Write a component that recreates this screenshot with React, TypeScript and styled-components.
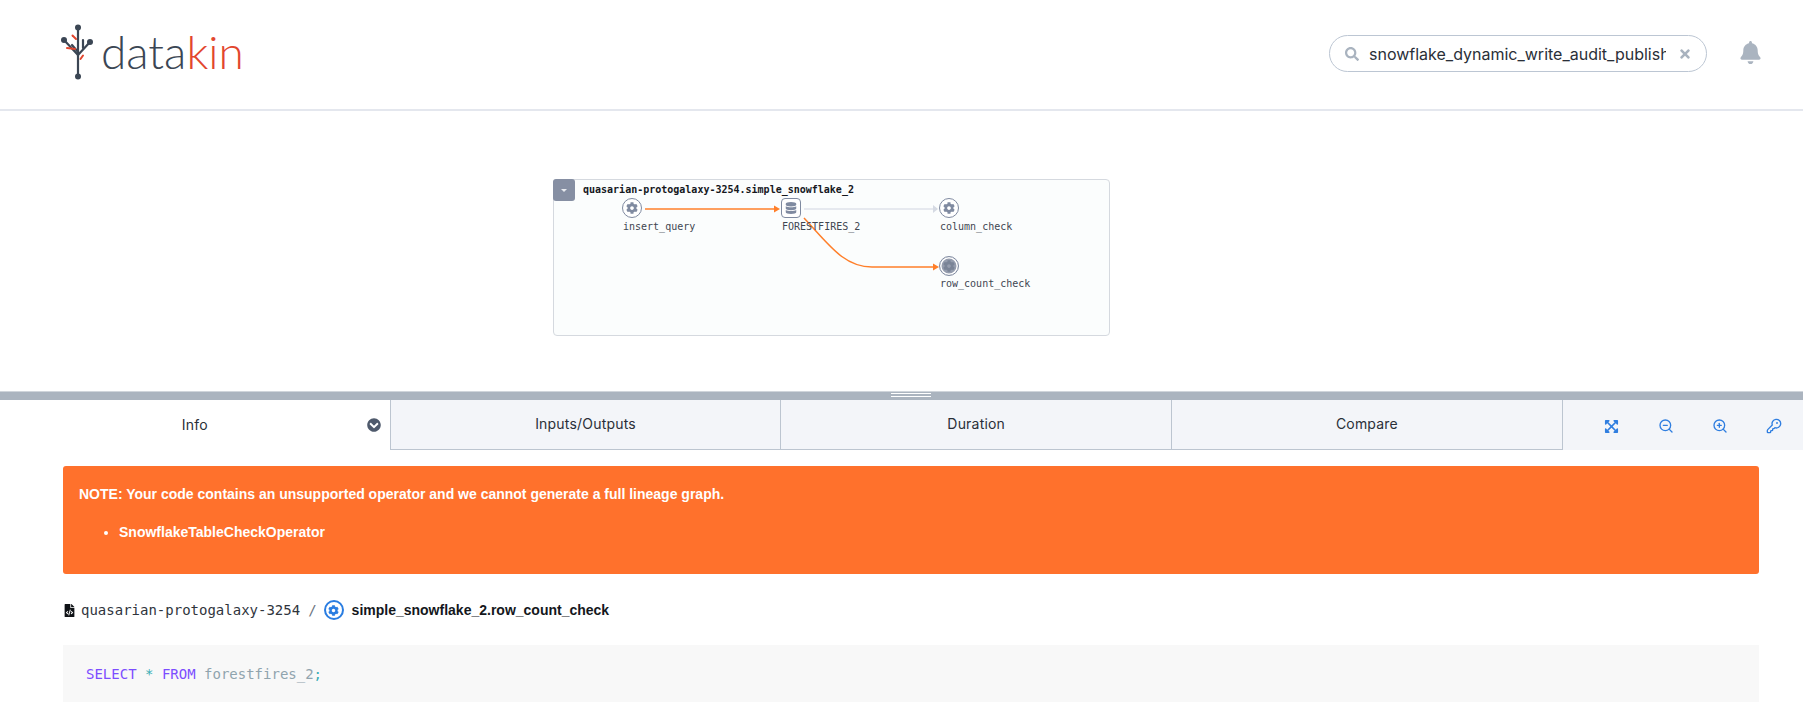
import React from "react";
import styled, { createGlobalStyle } from "styled-components";
import {
  FaBell,
  FaChevronCircleDown,
  FaCog,
  FaDatabase,
  FaExpandArrowsAlt,
  FaFileCode,
  FaSearch,
  FaTimes,
} from "react-icons/fa";
import { KeyRound, ZoomIn, ZoomOut } from "lucide-react";

const Global = createGlobalStyle`
  html, body { margin: 0; padding: 0; background: #fff; height: 712px; overflow: hidden; }
  * { box-sizing: border-box; }
  body { font-family: Inter, "Liberation Sans", sans-serif; color: #1f2530; }
`;

const Page = styled.div`
  width: 1803px;
  height: 712px;
  overflow: hidden;
  display: flex;
  flex-direction: column;
`;

const Header = styled.header`
  height: 111px;
  flex: none;
  border-bottom: 2px solid #e4e7ee;
  display: flex;
  align-items: center;
  padding: 0 41px 2px 60px;
`;

const Logo = styled.div`
  display: flex;
  align-items: center;
  gap: 5px;
  flex: 1;
  margin-top: -3px;
`;

const Wordmark = styled.span`
  font-family: Lato, sans-serif;
  font-weight: 300;
  font-size: 46px;
  line-height: 60px;
  color: #3b4654;
`;

const WordAccent = styled.span`
  color: #e2462e;
`;

const Search = styled.div`
  width: 378px;
  height: 37px;
  border: 1px solid #bcc6d3;
  border-radius: 19px;
  display: flex;
  align-items: center;
  padding: 0 14px 0 15px;
  color: #a9b3bf;
  font-size: 14px;
`;

const SearchText = styled.div`
  flex: 1;
  margin: 0 12px 0 10px;
  overflow: hidden;
  white-space: nowrap;
  font-size: 16px;
  color: #2a2f38;
`;

const BellWrap = styled.div`
  margin-left: 32px;
  color: #aab4c0;
  font-size: 23px;
  display: flex;
  margin-top: -2px;
`;

const GraphArea = styled.section`
  height: 280px;
  flex: none;
  padding: 68px 0 0 553px;
`;

const GraphBox = styled.div`
  position: relative;
  width: 557px;
  height: 157px;
  background: #fbfdfd;
  border: 1px solid #d5d9df;
  border-radius: 4px;
`;

const Collapse = styled.div`
  position: absolute;
  left: -1px;
  top: -1px;
  width: 22px;
  height: 22px;
  background: #868fa3;
  border-radius: 3px;
  display: flex;
  align-items: center;
  justify-content: center;
  &::after {
    content: "";
    border-left: 3px solid transparent;
    border-right: 3px solid transparent;
    border-top: 3px solid #e8ebf0;
  }
`;

const GraphTitle = styled.div`
  position: absolute;
  left: 29px;
  top: 3px;
  font-family: "DejaVu Sans Mono", monospace;
  font-weight: 700;
  font-size: 10px;
  line-height: 14px;
  color: #15181d;
  white-space: nowrap;
`;

const Edges = styled.svg`
  position: absolute;
  left: 0;
  top: 0;
  overflow: visible;
`;

const Node = styled.div<{ $x: number; $y: number; $square?: boolean; $active?: boolean }>`
  position: absolute;
  left: ${(p) => p.$x - 10}px;
  top: ${(p) => p.$y - 10}px;
  width: 20px;
  height: 20px;
  background: #fff;
  border: 1.5px solid #7f8aa0;
  border-radius: ${(p) => (p.$square ? "4px" : "50%")};
  color: #7f8aa0;
  font-size: 12px;
  display: flex;
  align-items: center;
  justify-content: center;
  ${(p) =>
    p.$active
      ? `box-shadow: inset 0 0 0 1.5px #fff, inset 0 0 0 10px #959dae; color: #7a8497;`
      : ""}
`;

const NodeLabel = styled.div<{ $x: number; $y: number }>`
  position: absolute;
  left: ${(p) => p.$x}px;
  top: ${(p) => p.$y}px;
  font-family: "DejaVu Sans Mono", monospace;
  font-size: 10px;
  line-height: 14px;
  color: #3f4651;
  white-space: nowrap;
`;

const Resizer = styled.div`
  height: 9px;
  flex: none;
  background: #abb4bf;
  border-top: 1px solid #d0d5db;
  display: flex;
  justify-content: center;
  padding-top: 1px;
`;

const Handle = styled.div`
  width: 40px;
  height: 4px;
  border-top: 1px solid #fff;
  border-bottom: 1px solid #fff;
  margin-left: 19px;
`;

const TabBar = styled.nav`
  height: 50px;
  flex: none;
  display: flex;
  background: #f3f5f9;
`;

const Tab = styled.div<{ $active?: boolean }>`
  position: relative;
  width: 390.7px;
  flex: none;
  display: flex;
  align-items: center;
  justify-content: center;
  padding-bottom: 2px;
  font-size: 14px;
  letter-spacing: 0.2px;
  color: #2a2f38;
  background: ${(p) => (p.$active ? "#fff" : "#f3f5f9")};
  border-right: 1px solid #bcc5d0;
  border-bottom: ${(p) => (p.$active ? "none" : "1px solid #bcc5d0")};
`;

const TabChevron = styled.span`
  position: absolute;
  right: 9px;
  top: 18px;
  display: flex;
  color: #4f5a6c;
  font-size: 14px;
`;

const Tools = styled.div`
  flex: 1;
  display: flex;
  align-items: center;
  padding: 2px 21px 0 41px;
  justify-content: space-between;
  color: #2f7ee0;
`;

const Tool = styled.span`
  display: flex;
  width: 16px;
  justify-content: center;
`;

const Content = styled.main`
  padding: 16px 44px 0 63px;
  display: flex;
  flex-direction: column;
`;

const Alert = styled.div`
  height: 108px;
  background: #ff712c;
  border-radius: 3px;
  padding: 20px 16px 0;
  color: #fff;
  font-family: "Liberation Sans", Arial, sans-serif;
  font-weight: 700;
  font-size: 14px;
  line-height: 16px;
`;

const AlertTitle = styled.div`
  margin-bottom: 22px;
`;

const AlertList = styled.ul`
  margin: 0;
  padding-left: 40px;
`;

const Crumbs = styled.div`
  height: 24px;
  margin-top: 24px;
  display: flex;
  align-items: center;
  font-size: 14px;
  color: #0f1216;
`;

const Project = styled.span`
  font-family: "DejaVu Sans Mono", monospace;
  font-size: 14px;
  color: #30353d;
  margin-left: 5px;
`;

const Slash = styled.span`
  font-family: "DejaVu Sans Mono", monospace;
  color: #6c7480;
  margin: 0 7px 0 8px;
`;

const GearBadge = styled.span`
  width: 20px;
  height: 20px;
  border: 2px solid #2a7de1;
  border-radius: 50%;
  color: #2a7de1;
  font-size: 11px;
  display: flex;
  align-items: center;
  justify-content: center;
  margin-right: 8px;
`;

const JobName = styled.span`
  font-family: "Liberation Sans", Arial, sans-serif;
  font-weight: 700;
  font-size: 14px;
  color: #14171c;
`;

const CodeBlock = styled.pre`
  margin: 23px 0 0;
  height: 57px;
  background: #f8f8f8;
  padding: 0 23px;
  display: flex;
  align-items: center;
  font-family: "DejaVu Sans Mono", monospace;
  font-size: 14px;
`;

const Tok = styled.span<{ $c: string }>`
  color: ${(p) => p.$c};
  white-space: pre;
`;

const TreeLogo = () => (
  <svg width="36" height="58" viewBox="0 0 36 58" fill="none" strokeLinecap="round">
    <g stroke="#3b4654" strokeWidth="2.2">
      <path d="M18 4V54" />
      <path d="M18 32L4 17" />
      <path d="M18 32L30 19" />
      <path d="M23 17V25" />
      <path d="M12 22L18 29" />
    </g>
    <g fill="#3b4654">
      <circle cx="18" cy="4.500" r="3" />
      <circle cx="18" cy="53.500" r="3" />
      <circle cx="4" cy="17" r="3" />
      <circle cx="30" cy="19" r="3" />
    </g>
    <g stroke="#e2462e" strokeWidth="2">
      <path d="M12.500 12.500L16 16" />
      <path d="M7 25L15 26" />
      <path d="M23 32.500L20.500 36" />
    </g>
  </svg>
);

export default function App() {
  return (
    <Page>
      <Global />
      <Header>
        <Logo>
          <TreeLogo />
          <Wordmark>
            data<WordAccent>kin</WordAccent>
          </Wordmark>
        </Logo>
        <Search>
          <FaSearch />
          <SearchText>snowflake_dynamic_write_audit_publish</SearchText>
          <FaTimes />
        </Search>
        <BellWrap>
          <FaBell />
        </BellWrap>
      </Header>

      <GraphArea>
        <GraphBox>
          <Collapse />
          <GraphTitle>quasarian-protogalaxy-3254.simple_snowflake_2</GraphTitle>
          <Edges width="557" height="157" viewBox="0 0 557 157" fill="none">
            <path d="M250 29H380" stroke="#dfe2ea" strokeWidth="1.5" />
            <path d="M379 25L384 29L379 33Z" fill="#d5dae3" />
            <path d="M91 29H221" stroke="#ff7f2a" strokeWidth="1.5" />
            <path d="M220 25.500L226 29L220 32.500Z" fill="#ff7f2a" />
            <path d="M250 38C275 65 290 87 318 87H380" stroke="#ff7f2a" strokeWidth="1.5" />
            <path d="M379 83.500L385 87L379 90.500Z" fill="#ff7f2a" />
          </Edges>
          <Node $x={78} $y={28}><FaCog /></Node>
          <NodeLabel $x={69} $y={40}>insert_query</NodeLabel>
          <Node $x={237} $y={28} $square><FaDatabase /></Node>
          <NodeLabel $x={228} $y={40}>FORESTFIRES_2</NodeLabel>
          <Node $x={395} $y={28}><FaCog /></Node>
          <NodeLabel $x={386} $y={40}>column_check</NodeLabel>
          <Node $x={395} $y={86} $active><FaCog /></Node>
          <NodeLabel $x={386} $y={97}>row_count_check</NodeLabel>
        </GraphBox>
      </GraphArea>

      <Resizer>
        <Handle />
      </Resizer>

      <TabBar>
        <Tab $active>
          Info
          <TabChevron>
            <FaChevronCircleDown />
          </TabChevron>
        </Tab>
        <Tab>Inputs/Outputs</Tab>
        <Tab>Duration</Tab>
        <Tab>Compare</Tab>
        <Tools>
          <Tool><FaExpandArrowsAlt size={15} /></Tool>
          <Tool><ZoomOut size={16} /></Tool>
          <Tool><ZoomIn size={16} /></Tool>
          <Tool><KeyRound size={16} /></Tool>
        </Tools>
      </TabBar>

      <Content>
        <Alert>
          <AlertTitle>
            NOTE: Your code contains an unsupported operator and we cannot generate a full lineage graph.
          </AlertTitle>
          <AlertList>
            <li>SnowflakeTableCheckOperator</li>
          </AlertList>
        </Alert>
        <Crumbs>
          <FaFileCode size={13} />
          <Project>quasarian-protogalaxy-3254</Project>
          <Slash>/</Slash>
          <GearBadge><FaCog /></GearBadge>
          <JobName>simple_snowflake_2.row_count_check</JobName>
        </Crumbs>
        <CodeBlock>
          <Tok $c="#7c4dff">SELECT</Tok>
          <Tok $c="#39adb5"> * </Tok>
          <Tok $c="#7c4dff">FROM</Tok>
          <Tok $c="#90a4ae"> forestfires_2</Tok>
          <Tok $c="#39adb5">;</Tok>
        </CodeBlock>
      </Content>
    </Page>
  );
}
